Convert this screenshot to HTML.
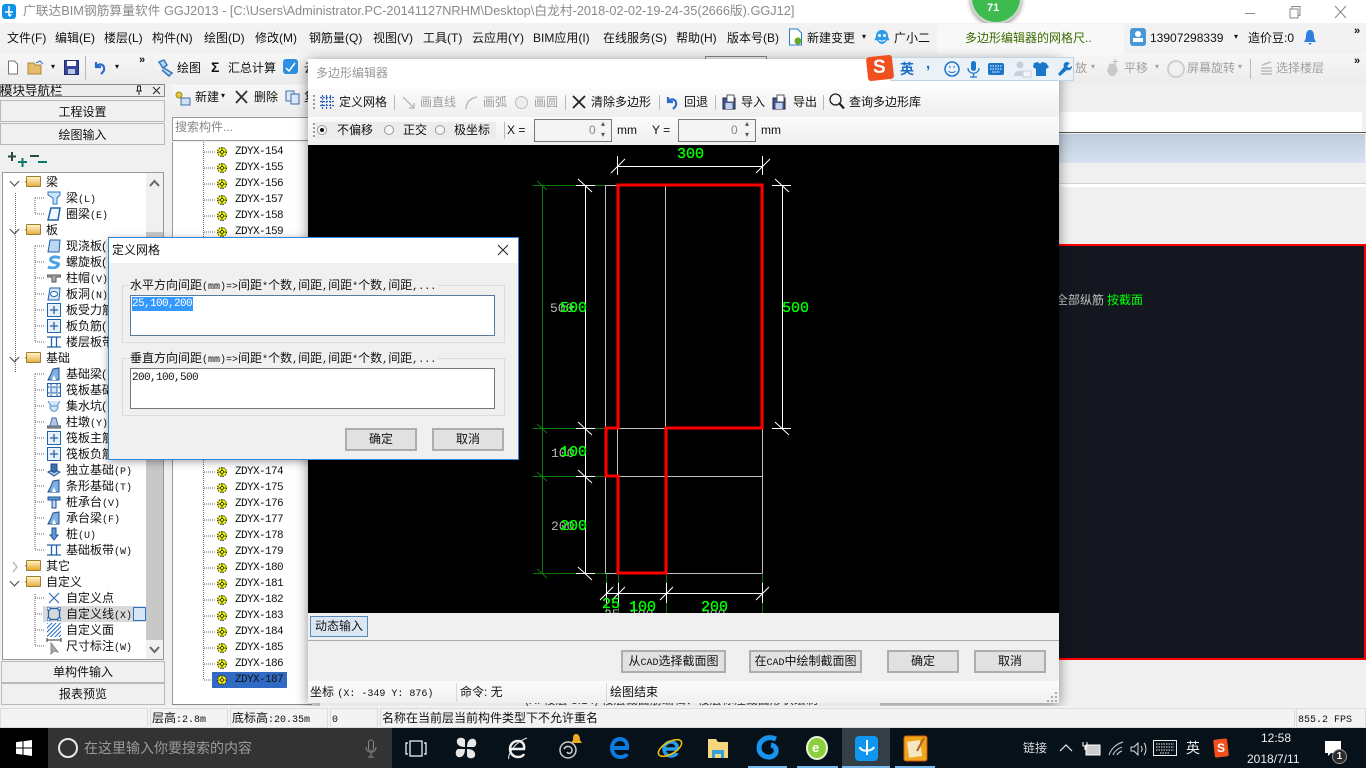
<!DOCTYPE html>
<html lang="zh"><head><meta charset="utf-8"><title>广联达BIM钢筋算量软件</title>
<style>
html,body{margin:0;padding:0}
body{width:1366px;height:768px;overflow:hidden;position:relative;background:#f0f0f0;font:12px/16px "Liberation Sans","Noto Sans CJK SC",sans-serif;color:#111}
div,span,svg{position:absolute}
use{position:static}
.t{white-space:nowrap;height:16px;line-height:16px}
.g{color:#a0a0a0}
i{font-style:normal;font-family:"Liberation Mono",monospace;font-size:10px}
.z{font:11px/16px "Liberation Mono",monospace;letter-spacing:-.6px;white-space:nowrap;color:#111;left:235px;height:16px}
.b{background:#e1e1e1;border:2px solid #adadad;box-sizing:border-box;text-align:center;line-height:19px;white-space:nowrap}
.n{background:#f0f0f0;border:1px solid #b9b9b9;box-sizing:border-box;text-align:center;font-size:12px}
.c{background:#f3f3f3;border:1px solid #dcdcdc;box-sizing:border-box;height:20px;top:708px;line-height:18px;white-space:nowrap;padding-left:1px}
.s{width:1px;background:#b8b8b8}
.tr{left:66px}
.f{left:46px}
.ic{width:14px;height:14px;left:47px}
.go{left:217px;width:10px;height:10px}
.fd{left:26px;width:15px;height:11px;background:linear-gradient(#fff3c4,#e3b04b);border:1px solid #a07c2c;box-sizing:border-box;border-radius:1px}
.ar{left:11px;width:6px;height:6px;border-right:1.5px solid #444;border-bottom:1.5px solid #444;transform:rotate(45deg)}
.sr{width:10px;height:10px;border:1px solid #999;border-radius:50%;box-sizing:border-box;background:#f7f7f7}
</style></head><body>

<svg width="0" height="0" style="left:0;top:0">
<defs>
<symbol id="gear" viewBox="0 0 10 10"><circle cx="5" cy="5" r="4.500" fill="#ff0" stroke="#222" stroke-dasharray="1.500 1"/><path d="M5 1v8M1 5h8" stroke="#222" stroke-width=".8"/><circle cx="5" cy="5" r="1.500" fill="#ff0" stroke="#222" stroke-width=".8"/></symbol>
<symbol id="beam" viewBox="0 0 14 14"><path d="M1 1h12v3l-3 3v6H6V7L1 4z" fill="#cfe3f7" stroke="#1f78c8"/></symbol>
<symbol id="ring" viewBox="0 0 14 14"><path d="M4 1h9l-2 12H1z" fill="#f0f6fd" stroke="#1f62ad" stroke-width="1.500"/></symbol>
<symbol id="slab" viewBox="0 0 14 14"><path d="M3 1h10l-1 12H1z" fill="#bcd8f2" stroke="#1f62ad"/></symbol>
<symbol id="spiral" viewBox="0 0 14 14"><path d="M13 3C6 0 1 4 5 6.500s8 1 6 4-7 3-10 1.500" fill="none" stroke="#4aa3e8" stroke-width="3"/></symbol>
<symbol id="cap" viewBox="0 0 14 14"><path d="M0 4h14v2H9v5H5V6H0z" fill="#aaa" stroke="#555"/></symbol>
<symbol id="hole" viewBox="0 0 14 14"><path d="M3 1h10l-1 12H1z" fill="#d6e6f7" stroke="#1f62ad"/><ellipse cx="7" cy="7" rx="3.500" ry="2.500" fill="#fff" stroke="#1f62ad"/></symbol>
<symbol id="cross" viewBox="0 0 14 14"><rect x=".5" y=".5" width="13" height="13" fill="#e8f0fa" stroke="#1f62ad"/><path d="M7 3v8M3 7h8" stroke="#1f62ad" stroke-width="1.300"/></symbol>
<symbol id="band" viewBox="0 0 14 14"><path d="M0 2h14M0 12h14M4.500 2v10M9.500 2v10" fill="none" stroke="#1f62ad" stroke-width="1.300"/></symbol>
<symbol id="found" viewBox="0 0 14 14"><rect x=".5" y=".5" width="13" height="13" fill="none" stroke="#1f62ad" stroke-width="1.200"/><rect x="4" y="4" width="6" height="6" fill="#d6e6f7" stroke="#1f62ad"/><path d="M1 4h2M1 10h2M11 4h2M11 10h2M4 1v2M10 1v2M4 11v2M10 11v2" stroke="#1f62ad"/></symbol>
<symbol id="pit" viewBox="0 0 14 14"><path d="M1 2l3 5h6l3-5M3 7c0 7 8 7 8 0" fill="#d6e6f7" stroke="#4a90d0"/></symbol>
<symbol id="ped" viewBox="0 0 14 14"><path d="M0 11h14v2H0z" fill="#999" stroke="#555"/><path d="M5 3h4l2 8H3z" fill="#b7c8dc" stroke="#3d6ea8"/></symbol>
<symbol id="iso" viewBox="0 0 14 14"><path d="M1 9l6-3 6 3-6 4z" fill="#a9c7e8" stroke="#1f4f90"/><path d="M4 1h6v7l-3 1.500L4 8z" fill="#3d6ea8" stroke="#1f4f90"/></symbol>
<symbol id="strip" viewBox="0 0 14 14"><path d="M1 13l3-6 2-5 6-1v12z" fill="#7fafe0" stroke="#1f4f90"/><path d="M5 13l2-5 2 5z" fill="#fff"/></symbol>
<symbol id="plat" viewBox="0 0 14 14"><path d="M1 2h12v3H1z" fill="#5f9bd6" stroke="#1f4f90"/><path d="M5 5h4v8H5z" fill="#bcd8f2" stroke="#1f4f90"/></symbol>
<symbol id="pile" viewBox="0 0 14 14"><path d="M5 1h4v7h2l-4 5-4-5h2z" fill="#5f9bd6" stroke="#1f4f90"/></symbol>
<symbol id="undo" viewBox="0 0 14 15"><path d="M3 2v5h5M3 7c4-5 9-2 8 3-.5 2-2 3-3 4" fill="none" stroke="#2a6ccb" stroke-width="2.200"/></symbol>
<symbol id="disk" viewBox="0 0 16 16"><rect x="1" y="4" width="12" height="11" fill="#3a5a9a" stroke="#223"/><rect x="3.500" y="9" width="7" height="6" fill="#c5d2ea"/><rect x="5" y="1" width="7" height="7" fill="#fff" stroke="#556"/></symbol>
</defs>
</svg>

<!-- title bar -->
<div style="left:0;top:0;width:1366px;height:23px;background:#fff"></div>
<div style="left:2px;top:4px;width:14px;height:15px;background:#1192e8;border-radius:3px"></div>
<svg style="left:2px;top:4px" width="14" height="15"><path d="M7 2v10M3 8h8M7 12a2 2 0 0 0 2-2" stroke="#fff" stroke-width="1.500" fill="none"/></svg>
<span class="t" style="left:23px;top:3px;color:#8a8a8a;font-size:12.750px">广联达BIM钢筋算量软件 GGJ2013 - [C:\Users\Administrator.PC-20141127NRHM\Desktop\白龙村-2018-02-02-19-24-35(2666版).GGJ12]</span>
<div style="left:970px;top:-28px;width:48px;height:48px;border-radius:50%;background:#3dbb4f;border:2px solid #cfd6cf;box-shadow:0 2px 4px rgba(0,0,0,.4)"></div>
<span class="t" style="left:987px;top:0;color:#fff;font-size:11px;font-weight:bold">71</span>
<svg style="left:1240px;top:2px" width="126" height="20" fill="none" stroke="#888"><path d="M5 11.500h10M50 7h8v9h-8zM52 7V4.500h8v9h-2M95 4l11 12M106 4L95 16"/></svg>

<!-- menu row -->
<div style="left:0;top:23px;width:1366px;height:31px;background:#f2f2f2"></div>
<span class="t" style="left:7px;top:30px">文件(F)</span>
<span class="t" style="left:55px;top:30px">编辑(E)</span>
<span class="t" style="left:104px;top:30px">楼层(L)</span>
<span class="t" style="left:152px;top:30px">构件(N)</span>
<span class="t" style="left:204px;top:30px">绘图(D)</span>
<span class="t" style="left:255px;top:30px">修改(M)</span>
<span class="t" style="left:309px;top:30px">钢筋量(Q)</span>
<span class="t" style="left:373px;top:30px">视图(V)</span>
<span class="t" style="left:423px;top:30px">工具(T)</span>
<span class="t" style="left:472px;top:30px">云应用(Y)</span>
<span class="t" style="left:533px;top:30px">BIM应用(I)</span>
<span class="t" style="left:603px;top:30px">在线服务(S)</span>
<span class="t" style="left:676px;top:30px">帮助(H)</span>
<span class="t" style="left:727px;top:30px">版本号(B)</span>
<svg style="left:788px;top:28px" width="15" height="18"><path d="M1.500 1h8l4 4v12h-12z" fill="#fff" stroke="#2a7fc4"/><circle cx="10" cy="13" r="3.500" fill="#6aa82a"/></svg>
<span class="t" style="left:807px;top:30px">新建变更</span>
<span class="t" style="left:862px;top:29px;font-size:8px">▾</span>
<svg style="left:874px;top:29px" width="16" height="16"><path d="M8 1c4 0 6 3 6 6 0 2 2 3 1 4s-2 0-2 0c-1 2-3 4-5 4s-4-2-5-4c0 0-1 1-2 0s1-2 1-4c0-3 2-6 6-6z" fill="#2d9be8"/><circle cx="5.500" cy="6.500" r="1.500" fill="#fff"/><circle cx="10.500" cy="6.500" r="1.500" fill="#fff"/><path d="M5 11c1.500 1.500 4.500 1.500 6 0" stroke="#fff" fill="none"/></svg>
<span class="t" style="left:894px;top:30px">广小二</span>
<div style="left:937px;top:24px;width:187px;height:30px;background:#f8f8f8;border-radius:3px"></div>
<span class="t" style="left:965px;top:30px;color:#3b6b00">多边形编辑器的网格尺..</span>
<div style="left:1130px;top:28px;width:16px;height:18px;background:#4a98d6;border-radius:3px"></div>
<div style="left:1135px;top:31px;width:6px;height:6px;background:#fff;border-radius:50%"></div>
<div style="left:1133px;top:38px;width:10px;height:4px;background:#fff"></div>
<span class="t" style="left:1150px;top:30px">13907298339</span>
<span class="t" style="left:1234px;top:29px;font-size:8px">▾</span>
<span class="t" style="left:1248px;top:30px">造价豆:0</span>
<svg style="left:1303px;top:29px" width="14" height="17"><path d="M7 1c3 0 4 3 4 6s1 4 2 6H1c1-2 2-3 2-6s1-6 4-6zM5 14h4l-2 2z" fill="#2e7fe0"/></svg>
<span class="t" style="left:1354px;top:23px;font-size:11px;font-weight:bold">»</span>

<!-- main toolbar -->
<div style="left:0;top:54px;width:150px;height:30px;background:linear-gradient(#f6f6f6,#ececec)"></div>
<div style="left:153px;top:54px;width:1213px;height:30px;background:linear-gradient(#f6f6f6,#ececec)"></div>
<svg style="left:6px;top:60px" width="14" height="15"><path d="M2.500 1h6l3 3v10h-9z" fill="#fff" stroke="#777"/></svg>
<svg style="left:27px;top:60px" width="19" height="15"><path d="M1 3h6l1 2h6v9H1z" fill="#e6bb6a" stroke="#a98a3f"/><path d="M9 3l4-2 3 3" stroke="#3a6fb5" fill="none"/></svg>
<span class="t" style="left:51px;top:59px;font-size:8px">▾</span>
<svg style="left:64px;top:60px" width="15" height="15"><rect x=".5" y=".5" width="14" height="14" fill="#34479a" stroke="#222f70"/><rect x="3" y="1" width="9" height="5" fill="#fff"/><rect x="4" y="9" width="7" height="5" fill="#bcc6e2"/></svg>
<div class="s" style="left:85px;top:56px;height:24px"></div>
<svg style="left:93px;top:60px" width="14" height="15"><use href="#undo"/></svg>
<span class="t" style="left:115px;top:59px;font-size:8px">▾</span>
<span class="t" style="left:139px;top:52px;font-size:11px;font-weight:bold">»</span>
<svg style="left:157px;top:59px" width="17" height="18" fill="none"><path d="M2 3l5-2 3 5-4 3zM7 9l8 5-3 3-7-6" stroke="#3277c2" stroke-width="1.500" fill="#bcd6f0"/></svg>
<span class="t" style="left:177px;top:60px">绘图</span>
<span class="t" style="left:211px;top:59px;font-weight:bold;font-size:14px">Σ</span>
<span class="t" style="left:228px;top:60px">汇总计算</span>
<div style="left:283px;top:59px;width:15px;height:15px;background:#2f8fe0;border-radius:3px"></div>
<svg style="left:283px;top:59px" width="15" height="15" fill="none"><path d="M3 9l3 3 6-8" stroke="#fff" stroke-width="1.500"/></svg>
<span class="t" style="left:304px;top:60px">云</span>
<div style="left:705px;top:56px;width:62px;height:6px;border:1px solid #888;box-sizing:border-box"></div>
<span class="t g" style="left:1075px;top:60px">放</span>
<span class="t g" style="left:1091px;top:59px;font-size:8px">▾</span>
<svg style="left:1105px;top:59px" width="15" height="18" fill="#c9c9c9"><path d="M4 6c0-2 6-2 7 0l2 6-4 5H5L2 12z"/><path d="M10 0v5M8 2.500h5" stroke="#bbb"/></svg>
<span class="t g" style="left:1124px;top:60px">平移</span>
<span class="t g" style="left:1155px;top:59px;font-size:8px">▾</span>
<div style="left:1167px;top:60px;width:14px;height:14px;border:2px solid #cfcfcf;border-radius:50%"></div>
<span class="t g" style="left:1187px;top:60px">屏幕旋转</span>
<span class="t g" style="left:1238px;top:59px;font-size:8px">▾</span>
<div class="s" style="left:1250px;top:59px;height:20px"></div>
<svg style="left:1259px;top:60px" width="15" height="15" fill="none" stroke="#bbb" stroke-width="1.500"><path d="M3 5l9-3M2 8h11M2 11h11M2 14h11"/></svg>
<span class="t g" style="left:1276px;top:60px">选择楼层</span>
<span class="t" style="left:1354px;top:53px;font-size:11px;font-weight:bold">»</span>

<!-- left nav -->
<div style="left:0;top:84px;width:165px;height:13px;background:#ededed;border:1px solid #888;box-sizing:border-box"></div>
<span class="t" style="left:0;top:83px;font-size:12.500px">模块导航栏</span>
<svg style="left:134px;top:85px" width="10" height="11" fill="none" stroke="#222"><path d="M3 1h4M3.500 1v5M6.500 1v5M2 6h6M5 6v4"/></svg>
<svg style="left:152px;top:86px" width="9" height="9" fill="none" stroke="#222"><path d="M1 1l7 7M8 1L1 8"/></svg>
<div class="n" style="left:0;top:100px;width:165px;height:22px;line-height:22px">工程设置</div>
<div class="n" style="left:0;top:123px;width:165px;height:22px;line-height:22px">绘图输入</div>
<div style="left:0;top:145px;width:165px;height:515px;background:#f0f0f0"></div>
<svg style="left:5px;top:151px" width="44" height="16" fill="none" stroke-width="2"><path d="M7 1v9M3 5.500h8" stroke="#2a4a3a"/><path d="M13 11h9M17.500 7v9" stroke="#0a7a6a"/><path d="M25 5h9" stroke="#2a4a3a"/><path d="M33 11h9" stroke="#0a7a6a"/></svg>
<div style="left:2px;top:172px;width:162px;height:488px;background:#fff;border:1px solid #999;box-sizing:border-box"></div>
<div style="left:146px;top:173px;width:17px;height:486px;background:#f0f0f0"></div>
<div style="left:146px;top:232px;width:17px;height:408px;background:#c8c8c8"></div>
<svg style="left:148px;top:178px" width="13" height="10" fill="none" stroke="#666" stroke-width="2"><path d="M2 8l4.500-5L11 8"/></svg>
<svg style="left:148px;top:645px" width="13" height="10" fill="none" stroke="#666" stroke-width="2"><path d="M2 2l4.500 5L11 2"/></svg>
<svg style="left:10px;top:173px" width="40" height="486" fill="none" stroke="#666" stroke-dasharray="1 1"><path d="M5.500 20v180M25 25v16M25 73v96M25 201v176M25 421v48M15 9h8M15 57h8M15 185h8M15 393h8M15 409h8M25 25h10M25 41h10M25 73h10M25 89h10M25 105h10M25 121h10M25 137h10M25 153h10M25 169h10M25 201h10M25 217h10M25 233h10M25 249h10M25 265h10M25 281h10M25 297h10M25 313h10M25 329h10M25 345h10M25 361h10M25 377h10M25 425h10M25 441h10M25 457h10M25 473h10M25 425v48"/></svg>
<div class="ar" style="top:178px"></div><div class="fd" style="top:176px"></div><span class="t f" style="top:174px">梁</span>
<svg class="ic" style="top:191px"><use href="#beam"/></svg><span class="t tr" style="top:190px">梁<i>(L)</i></span>
<svg class="ic" style="top:207px"><use href="#ring"/></svg><span class="t tr" style="top:206px">圈梁<i>(E)</i></span>
<div class="ar" style="top:226px"></div><div class="fd" style="top:224px"></div><span class="t f" style="top:222px">板</span>
<svg class="ic" style="top:239px"><use href="#slab"/></svg><span class="t tr" style="top:238px">现浇板(</span>
<svg class="ic" style="top:255px"><use href="#spiral"/></svg><span class="t tr" style="top:254px">螺旋板(</span>
<svg class="ic" style="top:271px"><use href="#cap"/></svg><span class="t tr" style="top:270px">柱帽<i>(V)</i></span>
<svg class="ic" style="top:287px"><use href="#hole"/></svg><span class="t tr" style="top:286px">板洞<i>(N)</i></span>
<svg class="ic" style="top:303px"><use href="#cross"/></svg><span class="t tr" style="top:302px">板受力筋</span>
<svg class="ic" style="top:319px"><use href="#cross"/></svg><span class="t tr" style="top:318px">板负筋(</span>
<svg class="ic" style="top:335px"><use href="#band"/></svg><span class="t tr" style="top:334px">楼层板带</span>
<div class="ar" style="top:354px"></div><div class="fd" style="top:352px"></div><span class="t f" style="top:350px">基础</span>
<svg class="ic" style="top:367px"><use href="#strip"/></svg><span class="t tr" style="top:366px">基础梁(</span>
<svg class="ic" style="top:383px"><use href="#found"/></svg><span class="t tr" style="top:382px">筏板基础</span>
<svg class="ic" style="top:399px"><use href="#pit"/></svg><span class="t tr" style="top:398px">集水坑(</span>
<svg class="ic" style="top:415px"><use href="#ped"/></svg><span class="t tr" style="top:414px">柱墩<i>(Y)</i></span>
<svg class="ic" style="top:431px"><use href="#cross"/></svg><span class="t tr" style="top:430px">筏板主筋</span>
<svg class="ic" style="top:447px"><use href="#cross"/></svg><span class="t tr" style="top:446px">筏板负筋</span>
<svg class="ic" style="top:463px"><use href="#iso"/></svg><span class="t tr" style="top:462px">独立基础<i>(P)</i></span>
<svg class="ic" style="top:479px"><use href="#strip"/></svg><span class="t tr" style="top:478px">条形基础<i>(T)</i></span>
<svg class="ic" style="top:495px"><use href="#plat"/></svg><span class="t tr" style="top:494px">桩承台<i>(V)</i></span>
<svg class="ic" style="top:511px"><use href="#strip"/></svg><span class="t tr" style="top:510px">承台梁<i>(F)</i></span>
<svg class="ic" style="top:527px"><use href="#pile"/></svg><span class="t tr" style="top:526px">桩<i>(U)</i></span>
<svg class="ic" style="top:543px"><use href="#band"/></svg><span class="t tr" style="top:542px">基础板带<i>(W)</i></span>
<svg style="left:11px;top:561px" width="8" height="12" fill="none" stroke="#bbb" stroke-width="1.500"><path d="M2 1l4 5-4 5"/></svg>
<div class="fd" style="top:560px;background:linear-gradient(#fff3c4,#e5a92c)"></div><span class="t f" style="top:558px">其它</span>
<div class="ar" style="top:578px"></div><div class="fd" style="top:576px"></div><span class="t f" style="top:574px">自定义</span>
<svg style="left:47px;top:591px" width="14" height="14" fill="none" stroke="#1f62ad"><path d="M2 2l10 10M12 2L2 12"/></svg><span class="t tr" style="top:590px">自定义点</span>
<div style="left:43px;top:606px;width:102px;height:16px;background:#d9d9d9"></div>
<svg class="ic" style="top:607px" fill="#fff" stroke="#1f62ad"><rect x="1.500" y="1.500" width="11" height="11" fill="none" stroke-width="1.300"/><rect x="0" y="0" width="3" height="3"/><rect x="11" y="0" width="3" height="3"/><rect x="0" y="11" width="3" height="3"/><rect x="11" y="11" width="3" height="3"/></svg><span class="t tr" style="top:606px">自定义线<i>(X)</i></span>
<div style="left:133px;top:607px;width:13px;height:14px;background:#d6e6f7;border:1px solid #2a72c4;box-sizing:border-box"></div>
<div class="ic" style="top:623px;background:repeating-linear-gradient(135deg,#2a72c4 0 1px,#fff 1px 3px)"></div><span class="t tr" style="top:622px">自定义面</span>
<svg style="left:46px;top:638px" width="16" height="17" fill="none"><path d="M1 2h14M1 0v4M15 0v4" stroke="#333"/><path d="M5 5v11l3-3 4 1z" fill="#aaa" stroke="#888"/></svg><span class="t tr" style="top:638px">尺寸标注<i>(W)</i></span>
<div class="n" style="left:1px;top:661px;width:164px;height:22px;line-height:20px">单构件输入</div>
<div class="n" style="left:1px;top:683px;width:164px;height:22px;line-height:20px">报表预览</div>

<!-- component panel -->
<div style="left:165px;top:84px;width:143px;height:622px;background:#f0f0f0"></div>
<div style="left:172px;top:85px;width:140px;height:31px;background:linear-gradient(#f8f8f8,#ececec)"></div>
<svg style="left:174px;top:90px" width="17" height="16"><circle cx="5" cy="5" r="3" fill="#e8c840" stroke="#a08a20"/><rect x="7" y="8" width="9" height="7" fill="#cfe0f5" stroke="#3d6ea8"/></svg>
<span class="t" style="left:195px;top:89px">新建</span>
<span class="t" style="left:221px;top:88px;font-size:8px">▾</span>
<svg style="left:235px;top:90px" width="13" height="14" fill="none" stroke="#333" stroke-width="1.800"><path d="M1 1l11 12M12 1L1 13"/></svg>
<span class="t" style="left:254px;top:89px">删除</span>
<svg style="left:285px;top:90px" width="15" height="15"><rect x="1" y="1" width="8" height="10" fill="#dbe9f8" stroke="#3d6ea8"/><rect x="6" y="4" width="8" height="10" fill="#dbe9f8" stroke="#3d6ea8"/></svg>
<span class="t" style="left:304px;top:89px">复</span>
<div style="left:172px;top:117px;width:140px;height:24px;background:#fff;border:1px solid #999;box-sizing:border-box"></div>
<span class="t" style="left:175px;top:119px;color:#888">搜索构件...</span>
<div style="left:172px;top:142px;width:140px;height:563px;background:#fff;border-left:1px solid #999;border-bottom:1px solid #888;box-sizing:border-box"></div>
<svg style="left:200px;top:142px" width="20" height="545" fill="none" stroke="#666" stroke-dasharray="1 1"><path d="M3.500 0v538M4 10h11M4 26h11M4 42h11M4 58h11M4 74h11M4 90h11M4 330h11M4 346h11M4 362h11M4 378h11M4 394h11M4 410h11M4 426h11M4 442h11M4 458h11M4 474h11M4 490h11M4 506h11M4 522h11M4 538h11"/></svg>
<div style="left:212px;top:672px;width:75px;height:16px;background:#316ac5"></div>
<svg class="go" style="top:147px"><use href="#gear"/></svg><span class="z" style="top:144px">ZDYX-154</span>
<svg class="go" style="top:163px"><use href="#gear"/></svg><span class="z" style="top:160px">ZDYX-155</span>
<svg class="go" style="top:179px"><use href="#gear"/></svg><span class="z" style="top:176px">ZDYX-156</span>
<svg class="go" style="top:195px"><use href="#gear"/></svg><span class="z" style="top:192px">ZDYX-157</span>
<svg class="go" style="top:211px"><use href="#gear"/></svg><span class="z" style="top:208px">ZDYX-158</span>
<svg class="go" style="top:227px"><use href="#gear"/></svg><span class="z" style="top:224px">ZDYX-159</span>
<svg class="go" style="top:467px"><use href="#gear"/></svg><span class="z" style="top:464px">ZDYX-174</span>
<svg class="go" style="top:483px"><use href="#gear"/></svg><span class="z" style="top:480px">ZDYX-175</span>
<svg class="go" style="top:499px"><use href="#gear"/></svg><span class="z" style="top:496px">ZDYX-176</span>
<svg class="go" style="top:515px"><use href="#gear"/></svg><span class="z" style="top:512px">ZDYX-177</span>
<svg class="go" style="top:531px"><use href="#gear"/></svg><span class="z" style="top:528px">ZDYX-178</span>
<svg class="go" style="top:547px"><use href="#gear"/></svg><span class="z" style="top:544px">ZDYX-179</span>
<svg class="go" style="top:563px"><use href="#gear"/></svg><span class="z" style="top:560px">ZDYX-180</span>
<svg class="go" style="top:579px"><use href="#gear"/></svg><span class="z" style="top:576px">ZDYX-181</span>
<svg class="go" style="top:595px"><use href="#gear"/></svg><span class="z" style="top:592px">ZDYX-182</span>
<svg class="go" style="top:611px"><use href="#gear"/></svg><span class="z" style="top:608px">ZDYX-183</span>
<svg class="go" style="top:627px"><use href="#gear"/></svg><span class="z" style="top:624px">ZDYX-184</span>
<svg class="go" style="top:643px"><use href="#gear"/></svg><span class="z" style="top:640px">ZDYX-185</span>
<svg class="go" style="top:659px"><use href="#gear"/></svg><span class="z" style="top:656px">ZDYX-186</span>
<svg class="go" style="top:675px"><use href="#gear"/></svg><span class="z" style="top:672px">ZDYX-187</span>

<!-- right background -->
<div style="left:1059px;top:84px;width:307px;height:622px;background:#f0f0f0"></div>
<div style="left:1059px;top:112px;width:303px;height:20px;background:#fff"></div>
<div style="left:1059px;top:132px;width:307px;height:1px;background:#555"></div>
<div style="left:1059px;top:134px;width:306px;height:29px;background:linear-gradient(#bfccdb,#d6e2ef)"></div>
<div style="left:1059px;top:183px;width:307px;height:1px;background:#d4d4d4"></div>
<div style="left:1059px;top:184px;width:306px;height:3px;background:#fff"></div>
<div style="left:1040px;top:244px;width:326px;height:416px;background:#14171f;border:2px solid #f00;box-sizing:border-box"></div>
<span class="t" style="left:1056px;top:292px;color:#c0c0c0">全部纵筋</span>
<span class="t" style="left:1107px;top:292px;color:#0f0">按截面</span>

<!-- polygon editor window -->
<div style="left:308px;top:59px;width:751px;height:644px;background:#f0f0f0;box-shadow:0 2px 12px rgba(0,0,0,.45)"></div>
<div style="left:308px;top:59px;width:751px;height:30px;background:#fff"></div>
<span class="t" style="left:316px;top:65px;color:#999">多边形编辑器</span>
<div style="left:308px;top:89px;width:751px;height:27px;background:linear-gradient(#fbfbfb,#efefef)"></div>
<svg style="left:312px;top:94px" width="4" height="18" fill="#999"><path d="M1 1h2v2H1zM1 5h2v2H1zM1 9h2v2H1zM1 13h2v2H1z"/></svg>
<svg style="left:320px;top:95px" width="14" height="15" stroke="#2a62b8" fill="none"><path d="M0 2.500h14M0 6.500h14M0 10.500h14M2.500 0v15M6.500 0v15M10.500 0v15" stroke-width="1.200" stroke-dasharray="2 1"/></svg>
<span class="t" style="left:339px;top:94px">定义网格</span>
<div class="s" style="left:394px;top:95px;height:15px"></div>
<svg style="left:401px;top:95px" width="16" height="16" fill="none" stroke="#bbb" stroke-width="1.500"><path d="M2 2l11 11M13 8v5H8"/></svg>
<span class="t g" style="left:420px;top:94px">画直线</span>
<svg style="left:464px;top:95px" width="15" height="16" fill="none" stroke="#bbb" stroke-width="1.500"><path d="M2 14C2 8 6 3 13 2"/></svg>
<span class="t g" style="left:483px;top:94px">画弧</span>
<div style="left:515px;top:96px;width:13px;height:13px;border:1px solid #bbb;border-radius:50%;box-sizing:border-box;background:#eee"></div>
<span class="t g" style="left:534px;top:94px">画圆</span>
<div class="s" style="left:565px;top:95px;height:15px"></div>
<svg style="left:572px;top:95px" width="14" height="14" fill="none" stroke="#222" stroke-width="1.800"><path d="M1 1l12 12M13 1L1 13"/></svg>
<span class="t" style="left:591px;top:94px">清除多边形</span>
<div class="s" style="left:659px;top:95px;height:15px"></div>
<svg style="left:665px;top:95px" width="14" height="15"><use href="#undo"/></svg>
<span class="t" style="left:684px;top:94px">回退</span>
<div class="s" style="left:715px;top:95px;height:15px"></div>
<svg style="left:722px;top:94px" width="16" height="16"><use href="#disk"/></svg>
<span class="t" style="left:741px;top:94px">导入</span>
<svg style="left:772px;top:94px" width="16" height="16"><use href="#disk"/></svg>
<span class="t" style="left:793px;top:94px">导出</span>
<div class="s" style="left:823px;top:95px;height:15px"></div>
<svg style="left:829px;top:93px" width="16" height="17" fill="none" stroke="#222"><circle cx="6.500" cy="6.500" r="5.500" stroke-width="1.300"/><path d="M10.500 10.500l4.500 5" stroke-width="2.200"/></svg>
<span class="t" style="left:849px;top:94px">查询多边形库</span>
<div style="left:308px;top:117px;width:751px;height:28px;background:linear-gradient(#fbfbfb,#efefef)"></div>
<svg style="left:312px;top:122px" width="4" height="18" fill="#999"><path d="M1 1h2v2H1zM1 5h2v2H1zM1 9h2v2H1zM1 13h2v2H1z"/></svg>
<div style="left:316px;top:122px;width:180px;height:17px;background:#ececec"></div>
<div class="sr" style="left:317px;top:125px"></div><div style="left:320px;top:128px;width:4px;height:4px;background:#111;border-radius:50%"></div>
<span class="t" style="left:337px;top:122px">不偏移</span>
<div class="sr" style="left:384px;top:125px"></div>
<span class="t" style="left:403px;top:122px">正交</span>
<div class="sr" style="left:435px;top:125px"></div>
<span class="t" style="left:454px;top:122px">极坐标</span>
<div class="s" style="left:504px;top:122px;height:17px"></div>
<span class="t" style="left:507px;top:122px">X =</span>
<div style="left:534px;top:119px;width:78px;height:23px;background:#f4f4f4;border:1px solid #777;box-sizing:border-box"></div>
<span class="t" style="left:589px;top:122px;color:#888">0</span>
<span class="t" style="left:601px;top:116px;font-size:8px;color:#555">▴</span><span class="t" style="left:601px;top:127px;font-size:8px;color:#555">▾</span>
<span class="t" style="left:617px;top:122px">mm</span>
<span class="t" style="left:652px;top:122px">Y =</span>
<div style="left:678px;top:119px;width:78px;height:23px;background:#f4f4f4;border:1px solid #777;box-sizing:border-box"></div>
<span class="t" style="left:731px;top:122px;color:#888">0</span>
<span class="t" style="left:745px;top:116px;font-size:8px;color:#555">▴</span><span class="t" style="left:745px;top:127px;font-size:8px;color:#555">▾</span>
<span class="t" style="left:761px;top:122px">mm</span>

<!-- canvas -->
<svg style="left:308px;top:145px;background:#000" width="751" height="468" viewBox="308 145 751 468" font-family="Liberation Mono, monospace">
<g stroke="#0a7a0a" fill="none" shape-rendering="crispEdges">
<path d="M542.500 185v388M533 185.500h73M533 428.500h73M533 476.500h73M533 573.500h73M606.500 573v40M618.500 573v40M666.500 573v40M762.500 573v40"/>
</g>
<path d="M537 181l10 9M537 424l10 9M537 472l10 9M537 569l10 9" stroke="#0a7a0a"/>
<g stroke="#c0c0c0" fill="none" shape-rendering="crispEdges">
<path d="M605.500 185v388M617.500 185v388M665.500 185v388M762.500 428v145M605.500 185.500h157M605.500 428.500h157M605.500 476.500h157M605.500 573.500h157"/>
</g>
<g stroke="#fff" fill="none">
<path shape-rendering="crispEdges" d="M617 166.500h146M617.500 156v19M762.500 156v19M585.500 185v388M576 185.500h19M576 428.500h19M576 476.500h19M576 573.500h19M782.500 185v243M772 185.500h19M772 428.500h19M606 593.500h157M606.500 583v20M618.500 583v20M666.500 583v20M762.500 583v20"/>
<path d="M611 173l14-14M756 173l14-14M578 179l14 13M578 422l14 13M578 470l14 13M578 567l14 13M775 179l14 13M775 422l14 13M600 600l13-13M612 600l13-13M660 600l13-13M756 600l13-13"/>
</g>
<path d="M618 185H762V428H666V573H618V476H606V428H618Z" fill="none" stroke="#f00" stroke-width="3" shape-rendering="crispEdges"/>
<g fill="#b8b8b8" font-size="13"><text x="550" y="312">500</text><text x="551" y="457">100</text><text x="551" y="530">200</text><text x="604" y="618">25</text><text x="630" y="618">100</text><text x="702" y="618">200</text></g>
<g fill="#0f0" stroke="#0f0" stroke-width=".35" font-size="15"><text x="677" y="158">300</text><text x="560" y="312">500</text><text x="782" y="312">500</text><text x="560" y="456">100</text><text x="560" y="530">200</text><text x="602" y="608">25</text><text x="629" y="611">100</text><text x="701" y="611">200</text></g>
</svg>

<!-- editor bottom -->
<div style="left:310px;top:616px;width:58px;height:21px;background:#dbe7f2;border:1px solid #5a8ab8;box-sizing:border-box;text-align:center;line-height:19px">动态输入</div>
<div style="left:308px;top:640px;width:751px;height:1px;background:#aaa"></div>
<div class="b" style="left:621px;top:650px;width:105px;height:23px">从<i>CAD</i>选择截面图</div>
<div class="b" style="left:749px;top:650px;width:113px;height:23px">在<i>CAD</i>中绘制截面图</div>
<div class="b" style="left:887px;top:650px;width:72px;height:23px">确定</div>
<div class="b" style="left:974px;top:650px;width:72px;height:23px">取消</div>
<div style="left:308px;top:681px;width:751px;height:22px;background:linear-gradient(#fbfbfb,#f0f0f0)"></div>
<div class="s" style="left:456px;top:683px;height:19px;background:#d8d8d8"></div>
<div class="s" style="left:606px;top:683px;height:19px;background:#d8d8d8"></div>
<span class="t" style="left:310px;top:684px">坐标 <i>(X: -349 Y: 876)</i></span>
<span class="t" style="left:460px;top:684px">命令: 无</span>
<span class="t" style="left:610px;top:684px">绘图结束</span>
<svg style="left:1047px;top:691px" width="11" height="11" fill="#aaa"><path d="M8 1h2v2H8zM4 5h2v2H4zM8 5h2v2H8zM0 9h2v2H0zM4 9h2v2H4zM8 9h2v2H8z"/></svg>
<div style="left:320px;top:703px;width:560px;height:5px;overflow:hidden;background:#e9e9e9"><span class="t" style="left:205px;top:-11px;color:#333;white-space:nowrap">(X: 楼层 3.14) 楼层截面筋编辑：楼层标注截面形状绘制</span></div>

<!-- dialog -->
<div style="left:108px;top:237px;width:411px;height:223px;background:#f0f0f0;border:1px solid #2f86dc;box-sizing:border-box;box-shadow:0 2px 8px rgba(0,0,0,.35)"></div>
<div style="left:109px;top:238px;width:409px;height:25px;background:#fff"></div>
<span class="t" style="left:112px;top:242px">定义网格</span>
<svg style="left:497px;top:244px" width="12" height="12" fill="none" stroke="#222"><path d="M1 1l10 10M11 1L1 11"/></svg>
<div style="left:122px;top:285px;width:383px;height:58px;border:1px solid #dcdcdc;box-sizing:border-box"></div>
<span class="t" style="left:130px;top:277px;background:#f0f0f0;padding-right:2px;font-size:12px">水平方向间距<i>(mm)=&gt;</i>间距<i>*</i>个数<i>,</i>间距<i>,</i>间距<i>*</i>个数<i>,</i>间距<i>,...</i></span>
<div style="left:130px;top:295px;width:365px;height:41px;background:#fff;border:1px solid #5a7a9a;box-sizing:border-box"></div>
<span class="t" style="left:132px;top:297px;background:#3399ff;color:#fff;font:11px/15px 'Liberation Mono',monospace;letter-spacing:-.6px;height:14px;padding-right:1px">25,100,200</span>
<div style="left:122px;top:358px;width:383px;height:58px;border:1px solid #dcdcdc;box-sizing:border-box"></div>
<span class="t" style="left:130px;top:350px;background:#f0f0f0;padding-right:2px;font-size:12px">垂直方向间距<i>(mm)=&gt;</i>间距<i>*</i>个数<i>,</i>间距<i>,</i>间距<i>*</i>个数<i>,</i>间距<i>,...</i></span>
<div style="left:130px;top:368px;width:365px;height:41px;background:#fff;border:1px solid #777;box-sizing:border-box"></div>
<span class="t" style="left:132px;top:370px;font:11px/16px 'Liberation Mono',monospace;letter-spacing:-.6px">200,100,500</span>
<div class="b" style="left:345px;top:428px;width:72px;height:23px">确定</div>
<div class="b" style="left:432px;top:428px;width:72px;height:23px">取消</div>

<!-- sogou bar -->
<div style="left:890px;top:57px;width:184px;height:24px;background:#eaf1f7;border:1px solid #c3d3e2;box-sizing:border-box"></div>
<div style="left:867px;top:56px;width:26px;height:24px;background:#f0501e;border-radius:3px;transform:rotate(-6deg)"></div>
<span class="t" style="left:873px;top:60px;color:#fff;font-size:19px;font-weight:bold">S</span>
<span class="t" style="left:900px;top:61px;color:#1a6fc4;font-size:14px;font-weight:bold">英</span>
<span class="t" style="left:926px;top:56px;color:#1a6fc4;font-size:15px;font-weight:bold">,</span>
<svg style="left:943px;top:60px" width="130" height="20" fill="none"><circle cx="9" cy="9" r="7" stroke="#1a76c8" stroke-width="1.500"/><path d="M7 6v2M11 6v2M5.500 11c1.500 2 5.500 2 7 0" stroke="#1a76c8"/><rect x="28" y="1" width="5" height="10" rx="2.500" fill="#1a76c8"/><path d="M25 8c0 7 11 7 11 0M30.500 14v3M27 17h7" stroke="#1a76c8" stroke-width="1.300"/><rect x="45" y="3" width="16" height="12" rx="2" fill="#1a76c8"/><path d="M47 6h12M47 9h12M49 12h8" stroke="#fff" stroke-dasharray="1.500 1"/><circle cx="77" cy="5" r="3.500" fill="#c4d0dc"/><path d="M71 16c0-7 12-7 12 0z" fill="#c4d0dc"/><rect x="80" y="11" width="8" height="6" fill="#f3f6f9" stroke="#c4d0dc"/><path d="M91 3l4-1c1 2 3 2 4 0l4 1 3 4-3 2v7h-10V9l-3-2z" fill="#1a76c8"/><path d="M124 2c-3 0-4 3-3 5l-6 7 2 2 7-6c3 1 5-1 5-4l-3 2-2-2 3-3z" fill="#1a76c8"/></svg>

<!-- status bar -->
<div style="left:0;top:706px;width:1366px;height:22px;background:#f2f2f2"></div>
<div class="c" style="left:0;width:148px"></div>
<div class="c" style="left:150px;width:78px">层高<i>:2.8m</i></div>
<div class="c" style="left:230px;width:98px">底标高<i>:20.35m</i></div>
<div class="c" style="left:330px;width:48px"><i>0</i></div>
<div class="c" style="left:380px;width:915px">名称在当前层当前构件类型下不允许重名</div>
<div class="c" style="left:1296px;width:70px"><i>855.2 FPS</i></div>

<!-- taskbar -->
<div style="left:0;top:728px;width:1366px;height:40px;background:#06111a"></div>
<div style="left:0;top:728px;width:48px;height:40px;background:#000"></div>
<svg style="left:16px;top:740px" width="16" height="16" fill="#fff"><path d="M0 2.200L6.500 1.300v6.200H0zM7.500 1.200L16 0v7.500H7.500zM0 8.500h6.500v6.200L0 13.800zM7.500 8.500H16V16l-8.500-1.200z"/></svg>
<div style="left:48px;top:728px;width:344px;height:40px;background:#333"></div>
<div style="left:58px;top:738px;width:20px;height:20px;border:2.500px solid #e8e8e8;border-radius:50%;box-sizing:border-box"></div>
<span class="t" style="left:84px;top:740px;color:#9a9a9a;font-size:14px">在这里输入你要搜索的内容</span>
<svg style="left:365px;top:739px" width="12" height="19" fill="none" stroke="#888"><rect x="3.500" y="1" width="5" height="11" rx="2.500"/><path d="M1 8c0 7 10 7 10 0M6 14v4M3 18h6"/></svg>
<svg style="left:405px;top:740px" width="22" height="17" fill="none" stroke="#fff" stroke-width="1.200"><rect x="5" y="1" width="12" height="15"/><path d="M3 3H1v11h2M19 3h2v11h-2"/></svg>
<svg style="left:455px;top:737px" width="22" height="22" fill="#e8e8e8"><path d="M10 10C4 10 1 7 2 3c1-3 7-3 8 0zM12 10c0-6 3-9 7-8 3 1 3 7 0 8zM12 12c6 0 9 3 8 7-1 3-7 3-8 0zM10 12c0 6-3 9-7 8-3-1-3-7 0-8z"/></svg>
<svg style="left:506px;top:736px" width="24" height="25" fill="none" stroke="#f0f0f0"><path d="M5 13h13c1-6-3-8-6-8-5 0-8 4-8 8s3 8 8 8c3 0 5-1 6-3" stroke-width="2.500"/><path d="M3 23C1 20 8 6 21 2" stroke-width="1"/></svg>
<svg style="left:556px;top:732px" width="30" height="30" fill="none" stroke="#ccc" stroke-width="1.500"><circle cx="12" cy="18" r="8"/><path d="M8 17c2-4 8-3 8 1s-4 4-5 2"/><path d="M20 2c3 0 4 3 4 6l2 3H15l2-3c0-3 0-6 3-6z" fill="#f0a820" stroke="none"/></svg>
<svg style="left:609px;top:736px" width="22" height="24" fill="none" stroke="#0d7ae0"><path d="M4 12h14c1-6-3-9-7-9-5 0-8 4-8 9s3 9 8 9c3 0 6-1 7-3" stroke-width="4"/></svg>
<svg style="left:656px;top:736px" width="28" height="26" fill="none"><path d="M9 13h12c1-5-3-7-6-7-4 0-7 3-7 7s3 7 7 7c2 0 5-1 6-3" stroke="#2a9be8" stroke-width="3.500"/><ellipse cx="14" cy="12" rx="13" ry="6" transform="rotate(-30 14 12)" stroke="#f5c400" stroke-width="1.500"/></svg>
<svg style="left:707px;top:737px" width="22" height="22"><path d="M1 2h8l2 3h10v16H1z" fill="#f3d77a"/><rect x="5" y="13" width="12" height="8" fill="#3aa0dc"/><rect x="8" y="17" width="6" height="4" fill="#f3d77a"/></svg>
<svg style="left:756px;top:735px" width="24" height="26" fill="none"><path d="M20 4C10 0 3 6 3 13c0 7 8 11 14 8 5-3 4-10-2-11" stroke="#1893ee" stroke-width="5"/></svg>
<div style="left:842px;top:728px;width:48px;height:40px;background:#333e46"></div>
<div style="left:806px;top:736px;width:22px;height:24px;background:#8ccf3c;border-radius:50%;border:2px solid #e8f5d8;box-sizing:border-box"></div>
<span class="t" style="left:812px;top:740px;color:#fff;font-weight:bold;font-size:13px">e</span>
<div style="left:855px;top:736px;width:23px;height:25px;background:#0f96ee;border-radius:4px"></div>
<svg style="left:855px;top:736px" width="23" height="25" fill="none" stroke="#fff" stroke-width="2"><path d="M12 4v15M5 11c0 5 12 5 14 0"/></svg>
<svg style="left:903px;top:735px" width="25" height="27"><rect x="1" y="1" width="23" height="25" rx="2" fill="#f2a51c" stroke="#c9580c"/><rect x="5" y="6" width="13" height="16" fill="#f6e7c3" transform="rotate(-8 11 14)"/><path d="M21 3l-7 13" stroke="#b3601b" stroke-width="2"/></svg>
<div style="left:748px;top:766px;width:39px;height:2px;background:#76b9ed"></div>
<div style="left:797px;top:766px;width:41px;height:2px;background:#76b9ed"></div>
<div style="left:842px;top:766px;width:48px;height:2px;background:#76b9ed"></div>
<div style="left:895px;top:766px;width:40px;height:2px;background:#76b9ed"></div>
<span class="t" style="left:1023px;top:740px;color:#ddd">链接</span>
<svg style="left:1059px;top:743px" width="14" height="10" fill="none" stroke="#eee" stroke-width="1.200"><path d="M1 8l6-6 6 6"/></svg>
<svg style="left:1081px;top:741px" width="20" height="15" fill="none" stroke="#fff"><rect x="5" y="4" width="14" height="10" fill="#ccc"/><path d="M2 1v4h4V1M4 5v4"/></svg>
<svg style="left:1108px;top:741px" width="18" height="16" fill="none" stroke="#bbb" stroke-width="1.200"><path d="M1 14C3 8 8 3 15 1M5 14c1-3 4-6 9-8M9 14c1-2 2-3 5-4"/></svg>
<svg style="left:1130px;top:741px" width="18" height="16" fill="none" stroke="#ddd"><path d="M1 6h3l4-4v12l-4-4H1zM11 5c1.500 2 1.500 4 0 6M14 2c2.500 3 2.500 9 0 12"/></svg>
<svg style="left:1153px;top:740px" width="24" height="17" fill="none" stroke="#eee"><rect x=".5" y=".5" width="23" height="15"/><path d="M3 4h18M3 7h18M3 10h18M7 13h10" stroke-dasharray="1.500 1"/></svg>
<span class="t" style="left:1186px;top:740px;color:#eee;font-size:14px">英</span>
<div style="left:1214px;top:739px;width:14px;height:18px;background:#f0501e;border-radius:2px;transform:rotate(-6deg)"></div>
<span class="t" style="left:1217px;top:740px;color:#fff;font-weight:bold;font-size:12px">S</span>
<span class="t" style="left:1261px;top:730px;color:#eee">12:58</span>
<span class="t" style="left:1247px;top:751px;color:#eee">2018/7/11</span>
<svg style="left:1325px;top:741px" width="16" height="15" fill="#fff"><path d="M0 0h16v12H6l-3 3v-3H0z"/></svg>
<div style="left:1332px;top:749px;width:15px;height:15px;background:#2b2b2b;border:1px solid #999;border-radius:50%;box-sizing:border-box;color:#fff;font-size:10px;line-height:13px;text-align:center;font-weight:bold">1</div>
</body></html>
